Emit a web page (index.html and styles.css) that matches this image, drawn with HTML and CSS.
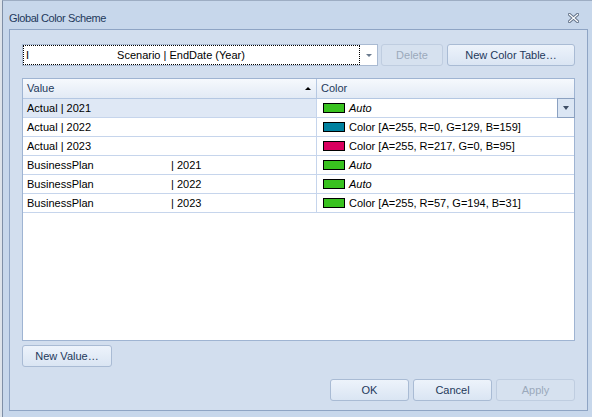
FILE: index.html
```html
<!DOCTYPE html>
<html>
<head>
<meta charset="utf-8">
<title>Global Color Scheme</title>
<link rel="stylesheet" href="styles.css">
</head>
<body>
<div class="screen">
  <div class="backdrop"></div>
  <div class="window">
    <div class="titlebar">
      <span class="title">Global Color Scheme</span>
      <svg class="close" width="11" height="10" viewBox="0 0 11 10">
        <path d="M1.5 1.5 L9.5 8.5 M9.5 1.5 L1.5 8.5" stroke="#66768c" stroke-width="3.2" stroke-linecap="square" fill="none"/>
        <path d="M1.5 1.5 L9.5 8.5 M9.5 1.5 L1.5 8.5" stroke="#ffffff" stroke-width="1.2" stroke-linecap="square" fill="none"/>
      </svg>
    </div>
    <div class="panel">
      <div class="toolbar">
        <div class="combo">
          <div class="combo-edit"><span>I</span><span class="redact combo-redact"></span><span>Scenario | EndDate (Year)</span></div>
          <div class="combo-btn"><span class="arrow-down small"></span></div>
        </div>
        <button class="btn btn-delete" disabled>Delete</button>
        <button class="btn btn-newtable">New Color Table…</button>
      </div>

      <div class="grid">
        <div class="grid-head">
          <div class="hcell col-value"><span>Value</span><span class="sort-up"></span></div>
          <div class="hcell col-color">Color</div>
        </div>

        <div class="row selected">
          <div class="vcell">Actual | 2021</div>
          <div class="ccell editing">
            <span class="swatch green"></span><span class="auto">Auto</span>
            <span class="cell-btn"><span class="arrow-down"></span></span>
          </div>
        </div>
        <div class="row">
          <div class="vcell">Actual | 2022</div>
          <div class="ccell"><span class="swatch teal"></span><span>Color [A=255, R=0, G=129, B=159]</span></div>
        </div>
        <div class="row">
          <div class="vcell">Actual | 2023</div>
          <div class="ccell"><span class="swatch crimson"></span><span>Color [A=255, R=217, G=0, B=95]</span></div>
        </div>
        <div class="row">
          <div class="vcell"><span class="bp-name">BusinessPlan</span>| 2021</div>
          <div class="ccell"><span class="swatch green"></span><span class="auto">Auto</span></div>
        </div>
        <div class="row">
          <div class="vcell"><span class="bp-name">BusinessPlan</span>| 2022</div>
          <div class="ccell"><span class="swatch green"></span><span class="auto">Auto</span></div>
        </div>
        <div class="row">
          <div class="vcell"><span class="bp-name">BusinessPlan</span>| 2023</div>
          <div class="ccell"><span class="swatch green"></span><span>Color [A=255, R=57, G=194, B=31]</span></div>
        </div>
      </div>

      <div class="below-grid">
        <button class="btn btn-newvalue">New Value…</button>
      </div>

      <div class="footer">
        <button class="btn btn-footer">OK</button>
        <button class="btn btn-footer">Cancel</button>
        <button class="btn btn-footer" disabled>Apply</button>
      </div>
    </div>
  </div>
</div>
</body>
</html>
```

FILE: styles.css
```css
* { box-sizing: border-box; }

html, body {
  margin: 0;
  padding: 0;
}

body {
  width: 592px;
  height: 417px;
  overflow: hidden;
  font-family: "Liberation Sans", Arial, sans-serif;
  font-size: 11px;
  color: #000;
  background: #c7d7eb;
}

.screen {
  display: flex;
  width: 592px;
  height: 417px;
}

.backdrop {
  width: 2px;
  background: #dde3ea;
}

.window {
  flex: 1;
  display: flex;
  flex-direction: column;
  background: #c7d7eb;
  border-left: 1px solid #7f8fa6;
  border-top: 1px solid #9dadc3;
}

.titlebar {
  height: 28px;
  display: flex;
  align-items: flex-start;
  justify-content: space-between;
  padding: 11px 13px 0 6px;
}

.title {
  line-height: 13px;
  color: #1e395b;
  letter-spacing: -0.4px;
}

.close {
  margin-top: 1px;
  display: block;
}

.panel {
  flex: 1;
  margin: 0 4px 6px 6px;
  border: 1px solid #8ea4c4;
  background: #d2deee;
  padding: 14px 12px 9px 12px;
  display: flex;
  flex-direction: column;
}

/* toolbar */
.toolbar {
  display: flex;
  height: 22px;
}

.combo {
  width: 356px;
  height: 22px;
  border: 1px solid #a9bad2;
  background: #fff;
  display: flex;
}

.combo-edit {
  flex: 1;
  height: 20px;
  border: 1px dotted #000;
  padding-left: 2px;
  line-height: 18px;
  white-space: nowrap;
  display: flex;
}

.redact {
  display: inline-block;
}

.combo-redact {
  width: 88px;
}

.combo-btn {
  width: 17px;
  display: flex;
  align-items: center;
  justify-content: center;
}

.arrow-down {
  width: 0;
  height: 0;
  border-left: 3.5px solid transparent;
  border-right: 3.5px solid transparent;
  border-top: 4px solid #3e4e66;
}

.arrow-down.small {
  border-left-width: 3px;
  border-right-width: 3px;
  border-top: 3px solid #6a7a8e;
}

.btn {
  height: 22px;
  padding: 0;
  font-family: "Liberation Sans", Arial, sans-serif;
  font-size: 11px;
  color: #1e395b;
  border: 1px solid #a9bbd4;
  border-radius: 3px;
  background: linear-gradient(#edf3fb, #dae5f3);
  display: flex;
  align-items: center;
  justify-content: center;
}

.btn:disabled {
  color: #9ba9bb;
  border-color: #bfcde0;
  background: #d6e1ef;
}

.btn-delete {
  width: 62px;
  margin-left: 3px;
}

.btn-newtable {
  width: 128px;
  margin-left: 4px;
}

/* grid */
.grid {
  margin-top: 12px;
  height: 263px;
  border: 1px solid #9fb4d2;
  background: #fff;
  display: flex;
  flex-direction: column;
}

.grid-head {
  height: 20px;
  display: flex;
  border-bottom: 1px solid #b4c7e2;
  background: linear-gradient(#f6f9fd, #e2eaf5);
  color: #1e395b;
  line-height: 19px;
}

.hcell {
  padding-left: 4px;
}

.hcell.col-value {
  width: 294px;
  border-right: 1px solid #b6c8e2;
  display: flex;
  justify-content: space-between;
  align-items: center;
  padding-right: 5px;
}

.hcell.col-color {
  flex: 1;
}

.sort-up {
  width: 0;
  height: 0;
  border-left: 3px solid transparent;
  border-right: 3px solid transparent;
  border-bottom: 3px solid #000;
}

.row {
  height: 19px;
  display: flex;
  border-bottom: 1px solid #c6d5ec;
}

.vcell {
  width: 294px;
  border-right: 1px solid #c6d5ec;
  padding-left: 4px;
  line-height: 18px;
  white-space: nowrap;
  display: flex;
}

.row.selected .vcell {
  background: #dfe8f5;
}

.bp-name {
  display: inline-block;
  width: 144px;
}

.ccell {
  flex: 1;
  display: flex;
  align-items: center;
  padding-left: 6px;
  line-height: 18px;
  white-space: nowrap;
}

.swatch {
  width: 22px;
  height: 10px;
  border: 1px solid #000;
  margin-right: 4px;
  flex: none;
}

.swatch.green { background: #39c21f; }
.swatch.teal { background: #00819f; }
.swatch.crimson { background: #d9005f; }

.auto {
  font-style: italic;
}

.cell-btn {
  margin-left: auto;
  align-self: flex-start;
  width: 18px;
  height: 20px;
  margin-top: -1px;
  margin-right: -1px;
  border: 1px solid #8ba1c1;
  background: #dbe6f4;
  display: flex;
  align-items: center;
  justify-content: center;
}

/* below grid */
.below-grid {
  margin-top: 4px;
  display: flex;
}

.btn-newvalue {
  width: 90px;
}

.footer {
  margin-top: 12px;
  display: flex;
  justify-content: flex-end;
  gap: 4px;
}

.btn-footer {
  width: 79px;
}
```
